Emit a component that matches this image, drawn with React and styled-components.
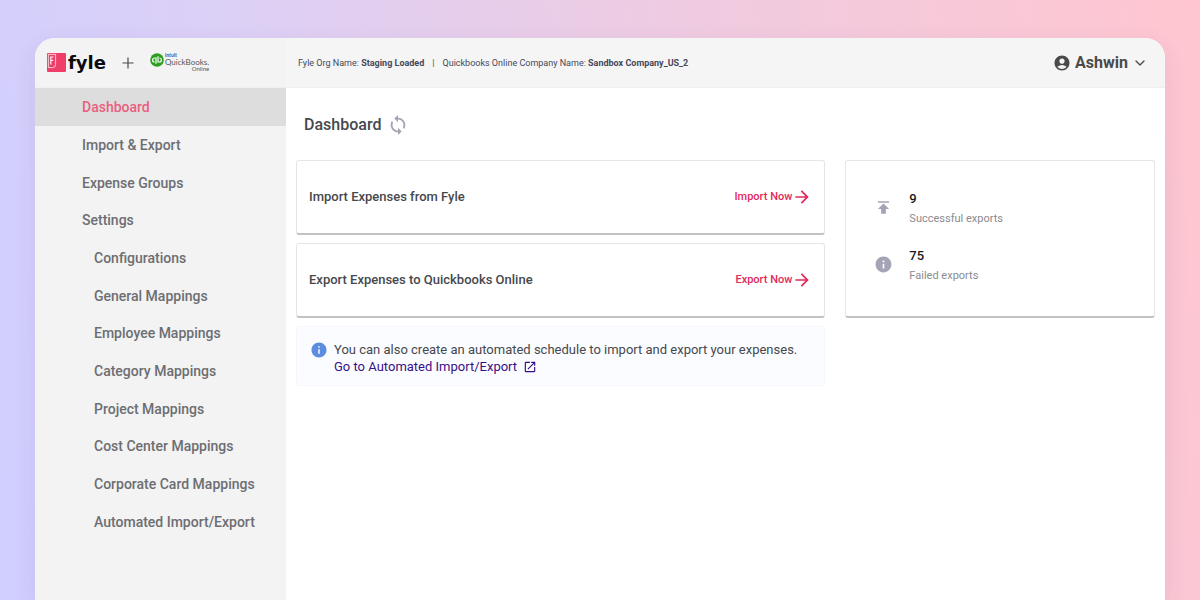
import React from 'react'
import styled, { createGlobalStyle } from 'styled-components';

import {
    MdAccountCircle,
    MdArrowForward,
    MdInfo,
    MdOpenInNew,
    MdPublish,
    MdSync,
} from 'react-icons/md';
import { ChevronDown } from 'lucide-react';

const GlobalStyle = createGlobalStyle`
    * {
        box-sizing: border-box;
    }

    body {
        margin: 0;
        font-family: Roboto, "Liberation Sans", sans-serif;
        color: #46484d;
    }

    button {
        padding: 0;
        border: 0;
        background: none;
        font-family: inherit;
        cursor: pointer;
    }

    a {
        text-decoration: none;
    }
`;

const BackGround = styled.div`
    min-height: 100vh;
    padding: 38px 35px 0 35px;

    display: flex;

    background: linear-gradient(80deg, #d0cfff 0%, #dcd0f6 25%, #f0cbe0 62%, #ffc6d0 100%);
`;

const AppWindow = styled.div`
    flex: 1;

    display: flex;
    flex-direction: column;

    border-radius: 20px 20px 0 0;
    background-color: #ffffff;
    box-shadow: 0 8px 24px rgba( 80, 50, 120, 0.1 );
    overflow: hidden;
`;

const Header = styled.header`
    height: 50px;
    border-bottom: 1px solid #efefef;

    display: flex;
    align-items: center;

    background-color: #f5f5f5;
`;

const LogoArea = styled.div`
    width: 251px;
    height: 49px;
    padding-left: 12px;

    display: flex;
    align-items: center;

    background-color: #f3f3f3;
`;

const FyleName = styled.span`
    margin-left: 2px;

    color: #0b0b0d;
    font-family: "DejaVu Sans", sans-serif;
    font-size: 18px;
    font-weight: 700;
    line-height: 20px;
`;

const PlusIcon = styled.svg`
    margin: 0 16px;
`;

const QuickBooksLogo = styled.div`
    display: flex;
    align-items: flex-start;
    gap: 1px;
`;

const QuickBooksName = styled.div`
    display: flex;
    flex-direction: column;

    color: #555555;
    font-family: Lato, sans-serif;
    font-size: 8px;
    line-height: 8px;

    & > small {
        color: #3a6fc4;
        font-size: 5px;
        font-weight: 900;
        line-height: 5px;
    }

    & > em {
        align-self: flex-end;
        font-size: 6px;
        font-style: normal;
        line-height: 6px;
    }
`;

const OrgInfo = styled.p`
    flex: 1;
    margin: 0 0 0 12px;

    color: #46485a;
    font-size: 9px;
    line-height: 12px;

    & > b {
        font-weight: 700;
    }

    & > span {
        margin: 0 8px;
    }
`;

const UserButton = styled.button`
    margin-right: 17px;

    display: flex;
    align-items: center;
    gap: 4px;

    color: #4a4a4a;
    font-size: 16px;
    font-weight: 700;
    line-height: 20px;
`;

const Body = styled.div`
    flex: 1;

    display: flex;
`;

const SideBar = styled.nav`
    width: 251px;

    background-color: #f3f3f3;
`;

const MenuList = styled.ul`
    min-height: 452px;
    margin: 0;
    padding: 0;

    display: grid;
    grid-auto-rows: 1fr;

    list-style: none;
`;

const MenuLink = styled.a`
    height: 100%;
    padding-top: 1px;
    padding-left: ${({ $nested }) => ($nested ? 59 : 47)}px;

    display: flex;
    align-items: center;

    background-color: ${({ $active }) => ($active ? '#dddddd' : 'transparent')};
    color: ${({ $active }) => ($active ? '#ea5f80' : '#6c6e72')};
    font-size: 14px;
    font-weight: 500;
`;

const Contents = styled.main`
    flex: 1;
    padding: 25px 10px 24px 10px;
`;

const TitleArea = styled.div`
    margin-bottom: 23px;
    padding-left: 8px;

    display: flex;
    align-items: center;
    gap: 6px;

    & > h1 {
        margin: 0;

        font-size: 16px;
        font-weight: 500;
        line-height: 24px;
    }

    & > button {
        display: flex;
        color: #a3a3b4;
    }
`;

const Columns = styled.div`
    display: grid;
    grid-template-columns: 530fr 310fr;
    column-gap: 20px;
    align-items: start;
`;

const LeftColumn = styled.div`
    display: flex;
    flex-direction: column;
    gap: 8px;
`;

const Card = styled.section`
    border: 1px solid #e6e6e6;
    border-bottom: 2px solid #c2c2c2;
    border-radius: 3px;

    background-color: #ffffff;
`;

const ActionCard = styled(Card)`
    min-height: 75px;
    padding: 0 12px;

    display: flex;
    align-items: center;
    justify-content: space-between;

    & > h2 {
        margin: 0;

        font-size: 13px;
        font-weight: 500;
        line-height: 16px;
    }
`;

const ActionButton = styled.button`
    display: flex;
    align-items: center;

    color: #e2295a;
    font-size: 11px;
    font-weight: 500;
    line-height: 16px;
`;

const Notice = styled.aside`
    min-height: 60px;
    padding: 14px 13px 10px 13px;
    border: 1px solid #f4f6fb;
    border-radius: 3px;

    display: flex;
    gap: 6px;

    background-color: #fafcff;
    font-size: 13px;
    line-height: 17px;

    & > svg {
        flex: none;
        color: #5c8ee0;
    }

    & p {
        margin: 0;
    }

    & a {
        display: flex;
        align-items: center;
        gap: 6px;

        color: #3a0f85;
    }
`;

const StatsCard = styled(Card)`
    min-height: 158px;
    padding: 30px 28px;

    display: flex;
    flex-direction: column;
    gap: 20px;
`;

const Stat = styled.div`
    display: flex;
    align-items: flex-start;
    gap: 16px;

    & > svg {
        margin-top: 7px;
        color: #a5a4b6;
    }

    & strong {
        display: block;

        color: #1b1b1b;
        font-size: 13px;
        font-weight: 500;
        line-height: 16px;
    }

    & span {
        display: block;
        margin-top: 3px;

        color: #8b8b8f;
        font-size: 11px;
        line-height: 18px;
    }
`;

const menus = [
    { name: 'Dashboard', active: true },
    { name: 'Import & Export' },
    { name: 'Expense Groups' },
    { name: 'Settings' },
    { name: 'Configurations', nested: true },
    { name: 'General Mappings', nested: true },
    { name: 'Employee Mappings', nested: true },
    { name: 'Category Mappings', nested: true },
    { name: 'Project Mappings', nested: true },
    { name: 'Cost Center Mappings', nested: true },
    { name: 'Corporate Card Mappings', nested: true },
    { name: 'Automated Import/Export', nested: true },
];

const FyleMark = () => (
    <svg width="19" height="19" viewBox="0 0 19 19" aria-hidden="true">
        <rect width="19" height="19" rx="1" fill="#ef3f68" />
        <path d="M8.6 1v10.6a3 3 0 0 1-3 3H1.4V1.4h7.2" fill="none" stroke="#fff" strokeOpacity="0.8" strokeWidth="0.9" />
        <path d="M6.4 4H3.8v7.6M3.8 7.4h2.4" fill="none" stroke="#fff" strokeWidth="1.1" />
    </svg>
);

const QuickBooksMark = () => (
    <svg width="14" height="14" viewBox="0 0 14 14" aria-hidden="true">
        <circle cx="7" cy="7" r="6.8" fill="#2ca01c" />
        <g fill="none" stroke="#fff" strokeWidth="1.2">
            <path d="M6 10.8V5H4.6a2 2 0 0 0 0 4" />
            <path d="M8 3.2V9h1.4a2 2 0 0 0 0-4" />
        </g>
    </svg>
);

export default function App() {
    return (
        <BackGround>
            <GlobalStyle />

            <AppWindow>
                <Header>
                    <LogoArea>
                        <FyleMark />
                        <FyleName>fyle</FyleName>
                        <PlusIcon width="12" height="12" viewBox="0 0 12 12" aria-hidden="true">
                            <path d="M6 0.5v11M0.5 6h11" stroke="#4a4a4a" strokeWidth="1.2" />
                        </PlusIcon>
                        <QuickBooksLogo>
                            <QuickBooksMark />
                            <QuickBooksName>
                                <small>intuit</small>
                                QuickBooks.
                                <em>Online</em>
                            </QuickBooksName>
                        </QuickBooksLogo>
                    </LogoArea>
                    <OrgInfo>
                        Fyle Org Name: <b>Staging Loaded</b>
                        <span>|</span>
                        Quickbooks Online Company Name: <b>Sandbox Company_US_2</b>
                    </OrgInfo>
                    <UserButton type="button">
                        <MdAccountCircle size={18} />
                        Ashwin
                        <ChevronDown size={16} strokeWidth={2} />
                    </UserButton>
                </Header>

                <Body>
                    <SideBar>
                        <MenuList>
                            {menus.map((menu) => (
                                <li key={menu.name}>
                                    <MenuLink href="#" $active={menu.active} $nested={menu.nested}>
                                        {menu.name}
                                    </MenuLink>
                                </li>
                            ))}
                        </MenuList>
                    </SideBar>

                    <Contents>
                        <TitleArea>
                            <h1>Dashboard</h1>
                            <button type="button" aria-label="Refresh">
                                <MdSync size={22} />
                            </button>
                        </TitleArea>

                        <Columns>
                            <LeftColumn>
                                <ActionCard>
                                    <h2>Import Expenses from Fyle</h2>
                                    <ActionButton type="button">
                                        Import Now
                                        <MdArrowForward size={20} />
                                    </ActionButton>
                                </ActionCard>
                                <ActionCard>
                                    <h2>Export Expenses to Quickbooks Online</h2>
                                    <ActionButton type="button">
                                        Export Now
                                        <MdArrowForward size={20} />
                                    </ActionButton>
                                </ActionCard>
                                <Notice>
                                    <MdInfo size={18} />
                                    <div>
                                        <p>You can also create an automated schedule to import and export your expenses.</p>
                                        <a href="#">
                                            Go to Automated Import/Export
                                            <MdOpenInNew size={14} />
                                        </a>
                                    </div>
                                </Notice>
                            </LeftColumn>

                            <StatsCard>
                                <Stat>
                                    <MdPublish size={19} />
                                    <div>
                                        <strong>9</strong>
                                        <span>Successful exports</span>
                                    </div>
                                </Stat>
                                <Stat>
                                    <MdInfo size={19} />
                                    <div>
                                        <strong>75</strong>
                                        <span>Failed exports</span>
                                    </div>
                                </Stat>
                            </StatsCard>
                        </Columns>
                    </Contents>
                </Body>
            </AppWindow>
        </BackGround>
    );
}
